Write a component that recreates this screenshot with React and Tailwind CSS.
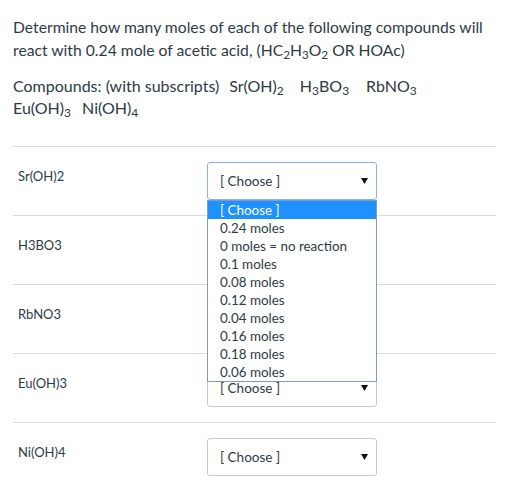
const options = [
  '[ Choose ]',
  '0.24 moles',
  '0 moles = no reaction',
  '0.1 moles',
  '0.08 moles',
  '0.12 moles',
  '0.04 moles',
  '0.16 moles',
  '0.18 moles',
  '0.06 moles',
];

const rows = ['Sr(OH)2', 'H3BO3', 'RbNO3', 'Eu(OH)3', 'Ni(OH)4'];

function Arrow() {
  return (
    <svg className="w-[7px] h-[6px]" viewBox="0 0 7 6">
      <path d="M0 0 H7 L3.5 6 Z" fill="#111" />
    </svg>
  );
}

function Select({ open }) {
  return (
    <div className="relative w-[170px]">
      <div className={`h-[38px] rounded-[3px] border bg-white flex items-center justify-between pl-[12px] pr-[8px] text-[13.5px] ${open ? 'border-[#8fb0e3]' : 'border-[#c8cbce]'}`}>
        <span>[ Choose ]</span>
        <Arrow />
      </div>
      {open && (
        <div className="absolute left-0 top-[38px] w-[170px] bg-white border border-[#7d9bd0] z-10">
          {options.map((o, i) => (
            <div key={o} className={`h-[18px] leading-[18px] pl-[12px] text-[13.4px] ${i === 0 ? 'bg-[#1e90ff] text-white' : 'text-[#2d3b45]'}`}>{o}</div>
          ))}
        </div>
      )}
    </div>
  );
}

export default function App() {
  return (
    <div className="w-[507px] h-[495px] bg-white text-[#2d3b45] pl-[13px] pr-[8px] pt-[16px]" style={{ fontFamily: 'Lato, "Open Sans", sans-serif' }}>
      <p className="text-[15.7px] leading-[23px]">
        Determine how many moles of each of the following compounds will react with 0.24 mole of acetic acid, (HC<sub>2</sub>H<sub>3</sub>O<sub>2</sub> OR HOAc)
      </p>
      <p className="text-[16px] leading-[22px] mt-[13px]">
        Compounds: (with subscripts)
        <span className="ml-[10px]">Sr(OH)<sub>2</sub></span>
        <span className="ml-[16px]">H<sub>3</sub>BO<sub>3</sub></span>
        <span className="ml-[17px]">RbNO<sub>3</sub></span>
        <br />
        <span>Eu(OH)<sub>3</sub></span>
        <span className="ml-[11px]">Ni(OH)<sub>4</sub></span>
      </p>
      <div className="mt-[27px] mr-[3px]">
        {rows.map((r, i) => (
          <div key={r} className="h-[69px] border-t border-[#dcdcdc] flex">
            <div className="w-[194px] pl-[5px] pt-[21px] text-[13px] leading-[16px]">{r}</div>
            <div className="pt-[15px]">
              <Select open={i === 0} />
            </div>
          </div>
        ))}
      </div>
    </div>
  );
}
